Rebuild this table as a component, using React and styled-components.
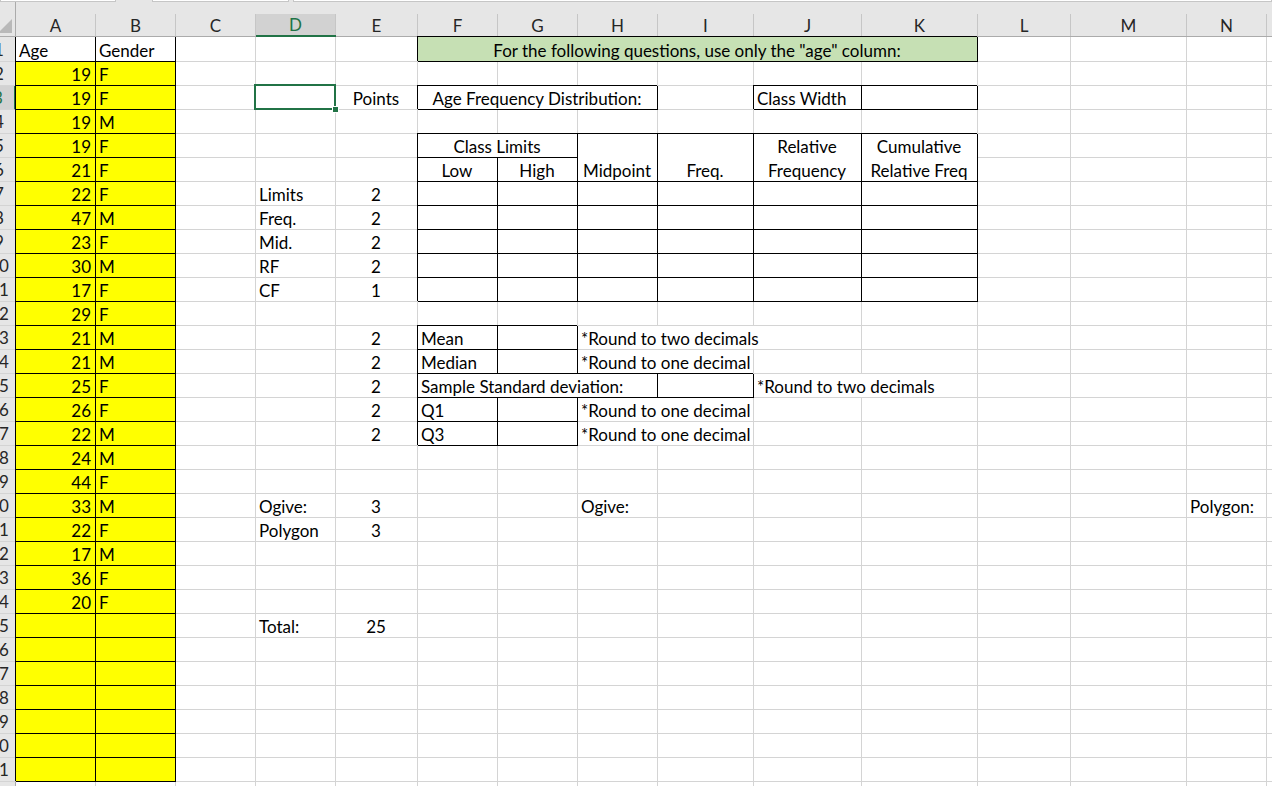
import React from "react";
import styled, { createGlobalStyle, css } from "styled-components";

const GlobalStyle = createGlobalStyle`
  html, body {
    margin: 0;
    padding: 0;
    background: #fff;
    overflow: hidden;
  }
  body {
    font-family: Lato, "Liberation Sans", sans-serif;
  }
`;

const GREEN = "#217346";
const YELLOW = "#ffff00";
const GRID = "#d4d4d4";

const COL_KEYS = ["A", "B", "C", "D", "E", "F", "G", "H", "I", "J", "K", "L", "M", "N", "O"];
const COL_WIDTHS = [80, 80, 80, 80, 82, 80, 80, 80, 96, 108, 116, 93, 116, 80, 80];
const ROW_COUNT = 32;
const ACTIVE_COL = "D";
const ACTIVE_ROW = 3;

const ages = [19, 19, 19, 19, 21, 22, 47, 23, 30, 17, 29, 21, 21, 25, 26, 22, 24, 44, 33, 22, 17, 36, 20];
const genders = "FFMFFFMFMFFMMFFMMFMFMFF".split("");

// cell specs, keyed by their top-left reference
function buildCells() {
  const list = [];
  const add = (ref, props = {}) => list.push({ ref, ...props });

  add("A1", { text: "Age", box: true, noTop: true });
  add("B1", { text: "Gender", box: true, noTop: true });
  for (let r = 2; r <= 31; r++) {
    const i = r - 2;
    add("A" + r, { text: ages[i] != null ? String(ages[i]) : "", box: true, bg: YELLOW, align: "right" });
    add("B" + r, { text: genders[i] || "", box: true, bg: YELLOW });
  }

  add("D3", { selected: true });
  add("E3", { text: "Points", align: "center" });

  [["Limits", "2"], ["Freq.", "2"], ["Mid.", "2"], ["RF", "2"], ["CF", "1"]].forEach(([label, pts], i) => {
    add("D" + (7 + i), { text: label });
    add("E" + (7 + i), { text: pts, align: "center" });
  });
  for (let r = 13; r <= 17; r++) add("E" + r, { text: "2", align: "center" });

  add("D20", { text: "Ogive:" });
  add("E20", { text: "3", align: "center" });
  add("D21", { text: "Polygon" });
  add("E21", { text: "3", align: "center" });
  add("D25", { text: "Total:" });
  add("E25", { text: "25", align: "center" });

  add("F1", { text: 'For the following questions, use only the "age" column:', cs: 6, box: true, bg: "#c6e0b4", align: "center" });
  add("F3", { text: "Age Frequency Distribution:", cs: 3, box: true, align: "center" });
  add("J3", { text: "Class Width", box: true });
  add("K3", { box: true });

  add("F5", { text: "Class Limits", cs: 2, box: true, align: "center" });
  add("H5", { text: "Midpoint", rs: 2, box: true, align: "center" });
  add("I5", { text: "Freq.", rs: 2, box: true, align: "center" });
  add("J5", { lines: ["Relative", "Frequency"], rs: 2, box: true, align: "center" });
  add("K5", { lines: ["Cumulative", "Relative Freq"], rs: 2, box: true, align: "center" });
  add("F6", { text: "Low", box: true, align: "center" });
  add("G6", { text: "High", box: true, align: "center" });
  for (let r = 7; r <= 11; r++) {
    ["F", "G", "H", "I", "J", "K"].forEach((c) => add(c + r, { box: true }));
  }

  add("F13", { text: "Mean", box: true });
  add("G13", { box: true });
  add("H13", { text: "*Round to two decimals", cs: 3 });
  add("F14", { text: "Median", box: true });
  add("G14", { box: true });
  add("H14", { text: "*Round to one decimal", cs: 2 });
  add("F15", { text: "Sample Standard deviation:", cs: 3, box: true });
  add("I15", { box: true });
  add("J15", { text: "*Round to two decimals", cs: 2 });
  add("F16", { text: "Q1", box: true });
  add("G16", { box: true });
  add("H16", { text: "*Round to one decimal", cs: 2 });
  add("F17", { text: "Q3", box: true });
  add("G17", { box: true });
  add("H17", { text: "*Round to one decimal", cs: 2 });

  add("H20", { text: "Ogive:" });
  add("N20", { text: "Polygon:" });

  return list;
}

const parseRef = (ref) => {
  const m = ref.match(/^([A-Z]+)(\d+)$/);
  return { c: COL_KEYS.indexOf(m[1]), r: Number(m[2]) };
};

const TopStrip = styled.div`
  display: flex;
  height: 2px;
  background: #e6e6e6;
`;

const StripBox = styled.div`
  box-sizing: border-box;
  flex: ${(p) => (p.$grow ? "1" : "none")};
  width: ${(p) => (p.$w ? p.$w + "px" : "auto")};
  margin-left: ${(p) => p.$gap || 0}px;
  background: #fff;
  border: 1px solid #c6c6c6;
  border-top: none;
`;

const Sheet = styled.div`
  display: grid;
  grid-template-columns: 16px ${COL_WIDTHS.map((w) => w + "px").join(" ")};
  grid-template-rows: 35px 25px repeat(${ROW_COUNT - 1}, 24px);
  width: max-content;
  font-size: 17px;
  color: #000;
`;

const Corner = styled.div`
  grid-column: 1;
  grid-row: 1;
  box-sizing: border-box;
  background: #e6e6e6;
  border-right: 1px solid #ababab;
  border-bottom: 1px solid #ababab;
  display: flex;
  align-items: flex-end;
  justify-content: flex-end;
  overflow: hidden;
`;

const ColHead = styled.div`
  grid-row: 1;
  box-sizing: border-box;
  padding-top: 12px;
  background: #e6e6e6;
  display: flex;
  border-bottom: ${(p) => (p.$active ? `2px solid ${GREEN}` : "1px solid #ababab")};
`;

const ColLabel = styled.div`
  flex: 1;
  box-sizing: border-box;
  border-right: 1px solid #c6c6c6;
  display: flex;
  align-items: center;
  justify-content: center;
  font-size: 17px;
  color: ${(p) => (p.$active ? GREEN : "#262626")};
  background: ${(p) => (p.$active ? "#d2d2d2" : "transparent")};
`;

const RowHead = styled.div`
  grid-column: 1;
  box-sizing: border-box;
  background: ${(p) => (p.$active ? "#d2d2d2" : "#e6e6e6")};
  border-right: ${(p) => (p.$active ? `2px solid ${GREEN}` : "1px solid #ababab")};
  border-bottom: 1px solid #d4d4d4;
  display: flex;
  align-items: center;
  justify-content: flex-end;
  overflow: hidden;
`;

const RowNum = styled.span`
  flex: none;
  width: 32px;
  text-align: center;
  font-size: 17px;
  color: ${(p) => (p.$active ? GREEN : "#262626")};
`;

const alignMap = { left: "flex-start", center: "center", right: "flex-end" };

const Cell = styled.div`
  grid-column: ${(p) => p.$col} / span ${(p) => p.$cs || 1};
  grid-row: ${(p) => p.$row} / span ${(p) => p.$rs || 1};
  box-sizing: border-box;
  min-width: 0;
  display: flex;
  flex-direction: column;
  justify-content: flex-end;
  align-items: ${(p) => alignMap[p.$align || "left"]};
  padding: 0 4px 0 3px;
  background: ${(p) => p.$bg || "#fff"};
  border-right: 1px solid ${(p) => (p.$box ? "#000" : GRID)};
  border-bottom: 1px solid ${(p) => (p.$box ? "#000" : GRID)};
  box-shadow: ${(p) => (p.$box ? (p.$noTop ? "-1px 0 0 0 #000" : "-1px -1px 0 0 #000") : "none")};
  line-height: 20px;
  white-space: nowrap;
  ${(p) =>
    p.$selected &&
    css`
      position: relative;
    `}
`;

const Line = styled.span`
  display: block;
  box-sizing: border-box;
  height: 24px;
  padding-top: 4px;
  line-height: 20px;
  text-align: center;
`;

const Selection = styled.div`
  position: absolute;
  left: -2px;
  top: -2px;
  right: -1px;
  bottom: -1px;
  border: 2px solid ${GREEN};
  z-index: 2;
  pointer-events: none;
`;

const FillHandle = styled.div`
  position: absolute;
  right: -5px;
  bottom: -5px;
  width: 5px;
  height: 5px;
  background: ${GREEN};
  border: 1px solid #fff;
`;

function SelectAllMark() {
  return (
    <svg width="15" height="20" viewBox="0 0 15 20">
      <polygon points="12,3 12,17 -2,17" fill="#b9b9b9" />
    </svg>
  );
}

export default function App() {
  const specs = buildCells();
  const byRef = {};
  const covered = new Set();
  specs.forEach((s) => {
    const { c, r } = parseRef(s.ref);
    byRef[s.ref] = { ...s, c, r };
    for (let dc = 0; dc < (s.cs || 1); dc++) {
      for (let dr = 0; dr < (s.rs || 1); dr++) {
        if (dc || dr) covered.add(COL_KEYS[c + dc] + (r + dr));
      }
    }
  });

  const items = [];
  items.push(
    <Corner key="corner">
      <SelectAllMark />
    </Corner>
  );
  COL_KEYS.forEach((k, i) => (
    items.push(
      <ColHead key={"h" + k} $active={k === ACTIVE_COL} style={{ gridColumn: i + 2 }}>
        <ColLabel $active={k === ACTIVE_COL}>{k}</ColLabel>
      </ColHead>
    )
  ));

  for (let r = 1; r <= ROW_COUNT; r++) {
    items.push(
      <RowHead key={"r" + r} $active={r === ACTIVE_ROW} style={{ gridRow: r + 1 }}>
        <RowNum $active={r === ACTIVE_ROW}>{r}</RowNum>
      </RowHead>
    );
    COL_KEYS.forEach((k, c) => {
      const ref = k + r;
      if (covered.has(ref)) return;
      const s = byRef[ref] || {};
      items.push(
        <Cell
          key={ref}
          $col={c + 2}
          $row={r + 1}
          $cs={s.cs}
          $rs={s.rs}
          $box={s.box}
          $noTop={s.noTop}
          $bg={s.bg}
          $align={s.align}
          $selected={s.selected}
        >
          {s.lines ? s.lines.map((l) => <Line key={l}>{l}</Line>) : s.text}
          {s.selected && (
            <Selection>
              <FillHandle />
            </Selection>
          )}
        </Cell>
      );
    });
  }

  return (
    <>
      <GlobalStyle />
      <TopStrip>
        <StripBox $w={116} />
        <StripBox $gap={36} $w={137} />
        <StripBox $gap={4} $grow />
      </TopStrip>
      <Sheet>{items}</Sheet>
    </>
  );
}
